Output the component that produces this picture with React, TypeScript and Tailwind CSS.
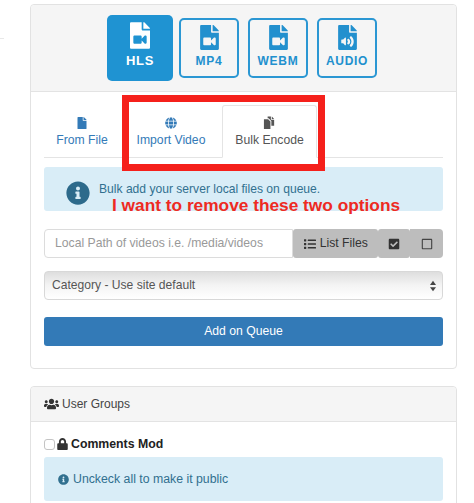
import React from "react";
import { FaFile, FaFileVideo, FaFileAudio, FaGlobe, FaList, FaCheckSquare, FaRegSquare, FaInfoCircle, FaUsers, FaLock } from "react-icons/fa";

function FormatButton({ label, audio }: { label: string; audio?: boolean }) {
  const Icon = audio ? FaFileAudio : FaFileVideo;
  return (
    <div className="flex h-[60px] w-[60px] flex-col items-center rounded-[5px] border-2 border-[#2b97d3] pt-[5px] text-[#2290ce]">
      <Icon className="h-[25px] w-[19px]" />
      <span className="mt-[4px] text-[12px] leading-[14px] font-bold tracking-[0.7px]">{label}</span>
    </div>
  );
}

function BulkIcon() {
  return (
    <svg viewBox="0 0 14 14" className="h-[13px] w-[13px]" fill="#555">
      <path d="M1 3.500h4.500L8 6v8H1z" />
      <path d="M5 0.500h3.500V4H12v6.500H9V5.500L6 2.500H5z" />
      <path d="M9.500 0.500L12 3.200H9.500z" />
    </svg>
  );
}

function Arrows() {
  return (
    <svg viewBox="0 0 8 14" className="h-[12px] w-[6px]" fill="#444">
      <path d="M4 0l4 5.500H0z" />
      <path d="M4 14L0 8.500h8z" />
    </svg>
  );
}

export default function App() {
  return (
    <div className="relative h-[503px] w-[474px] overflow-hidden bg-white pt-[4px] pl-[30px] font-['Liberation_Sans',Arial,sans-serif] text-[#555]">
      <section className="h-[365px] w-[427px] rounded-[4px] border border-[#e2e2e2] bg-white">
        <header className="flex h-[87px] items-center gap-[9px] rounded-t-[4px] border-b border-[#e3e3e3] bg-[#f5f5f5] pl-[76px]">
          <div className="mr-[-3px] flex h-[66px] w-[66px] flex-col items-center rounded-[5px] bg-[#1f93d2] pt-[7px] text-white">
            <FaFileVideo className="h-[27px] w-[20px]" />
            <span className="mt-[4px] text-[13px] leading-[16px] font-bold tracking-[0.7px]">HLS</span>
          </div>
          <FormatButton label="MP4" />
          <FormatButton label="WEBM" />
          <FormatButton label="AUDIO" audio />
        </header>

        <div className="px-[13px]">
          <nav className="flex h-[66px] border-b border-[#e4e4e4] pt-[13px] text-[12.2px] text-[#337ab7]">
            <div className="flex w-[76px] flex-col items-center">
              <FaFile className="mt-[12px] h-[12px] w-[10px]" />
              <span className="mt-[4px] leading-[14px]">From File</span>
            </div>
            <div className="flex w-[102px] flex-col items-center">
              <FaGlobe className="mt-[12px] h-[12px] w-[12px]" />
              <span className="mt-[4px] leading-[14px]">Import Video</span>
            </div>
            <div className="mb-[-1px] flex w-[95px] flex-col items-center rounded-t-[3px] border border-[#e4e4e4] border-b-white bg-white text-[#555]">
              <span className="mt-[10px] h-[13px]"><BulkIcon /></span>
              <span className="mt-[4px] leading-[14px]">Bulk Encode</span>
            </div>
          </nav>

          <div className="mt-[9px] flex h-[44px] items-center rounded-[3px] bg-[#d9edf7] pl-[22px] text-[12.1px] text-[#31708f]">
            <FaInfoCircle className="mt-[8px] h-[24px] w-[24px] text-[#2d6a8b]" />
            <span className="ml-[9px]">Bulk add your server local files on queue.</span>
          </div>

          <div className="mt-[18px] flex h-[29px] text-[12.2px]">
            <div className="flex w-[250px] items-center rounded-l-[4px] border border-[#dcdcdc] bg-white pl-[10px] text-[#999]">
              Local Path of videos i.e. /media/videos
            </div>
            <div className="flex w-[85px] items-center justify-center gap-[4px] rounded-[3px] bg-[#bdbdbd] text-[#333]">
              <FaList className="h-[12px] w-[12px]" />
              List Files
            </div>
            <div className="flex w-[32px] items-center justify-center rounded-[3px] bg-[#bdbdbd] text-[#333]">
              <FaCheckSquare className="h-[12px] w-[12px]" />
            </div>
            <div className="flex w-[33px] items-center justify-center rounded-r-[4px] bg-[#bdbdbd] text-[#444]">
              <FaRegSquare className="h-[12px] w-[12px]" />
            </div>
          </div>

          <div className="mt-[13px] flex h-[29px] items-center justify-between rounded-[4px] border border-[#d8d8d8] bg-gradient-to-b from-[#dedede] via-[#f4f4f4] to-white pr-[6px] pl-[7px] text-[12.1px] text-[#555]">
            <span>Category - Use site default</span>
            <Arrows />
          </div>

          <div className="mt-[17px] flex h-[29px] items-center justify-center rounded-[3px] bg-[#337ab7] text-[12.2px] text-white">
            Add on Queue
          </div>
        </div>
      </section>

      <section className="mt-[17px] h-[120px] w-[427px] rounded-t-[4px] border border-[#e2e2e2] bg-white">
        <header className="flex h-[35px] items-center gap-[3px] rounded-t-[4px] border-b border-[#e3e3e3] bg-[#f5f5f5] pl-[13px] text-[12px] text-[#444]">
          <FaUsers className="h-[12px] w-[15px] text-[#333]" />
          User Groups
        </header>
        <div className="px-[13px]">
          <div className="flex h-[35px] items-center pt-[9px] text-[12.3px] font-bold text-[#222]">
            <span className="mt-[1px] h-[11px] w-[11px] rounded-[3px] border border-[#c4c4c4] bg-white" />
            <FaLock className="ml-[2px] h-[12px] w-[11px] text-[#333]" />
            <span className="ml-[3px]">Comments Mod</span>
          </div>
          <div className="flex h-[44px] items-center rounded-[3px] bg-[#d9edf7] pl-[14px] text-[12.3px] text-[#31708f]">
            <FaInfoCircle className="h-[11px] w-[11px]" />
            <span className="ml-[4px]">Unckeck all to make it public</span>
          </div>
        </div>
      </section>

      <div className="absolute top-[95px] left-[122px] h-[76px] w-[203px] border-[7px] border-[#f5201b]" />
      <div className="absolute top-[195px] left-[112px] text-[17.3px] leading-[20px] font-bold whitespace-nowrap text-[#ee2a22]">
        I want to remove these two options
      </div>
      <div className="absolute top-[38px] left-0 h-[1px] w-[4px] bg-[#e8e8e8]" />
    </div>
  );
}
